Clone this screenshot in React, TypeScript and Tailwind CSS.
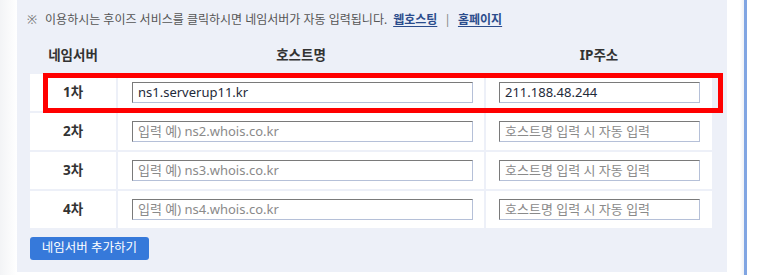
import React from 'react';

const rows = [
  { label: '1차', host: 'ns1.serverup11.kr', ip: '211.188.48.244' },
  { label: '2차', host: '', hostPh: '입력 예) ns2.whois.co.kr', ip: '' },
  { label: '3차', host: '', hostPh: '입력 예) ns3.whois.co.kr', ip: '' },
  { label: '4차', host: '', hostPh: '입력 예) ns4.whois.co.kr', ip: '' },
];

const font = { fontFamily: '"Noto Sans", "Noto Sans CJK KR", sans-serif' };

function Field({ value, placeholder, className }: { value: string; placeholder?: string; className: string }) {
  return (
    <div
      className={
        'flex h-[21px] items-center border border-t-[#7a7a7a] border-l-[#7a7a7a] border-r-[#b5c0d8] border-b-[#b5c0d8] bg-white px-[5px] text-[13px] leading-none ' +
        className
      }
    >
      {value ? (
        <span className="text-[#1e2a3a]">{value}</span>
      ) : (
        <span className="text-[#8a8a8a]">{placeholder}</span>
      )}
    </div>
  );
}

export default function App() {
  return (
    <div className="relative flex h-[275px] w-[760px] bg-white" style={font}>
      <div className="w-[17px] bg-gradient-to-r from-[#f3f4f6] to-white" />

      <div className="flex h-[272px] w-[710px] flex-col bg-[#edf0f8] px-[10px]">
        <div className="mt-[10px] flex h-[20px] items-center text-[12px] text-[#555]">
          <span className="mr-[8px] text-[#777]">※</span>
          <span>이용하시는 후이즈 서비스를 클릭하시면 네임서버가 자동 입력됩니다.</span>
          <a className="ml-[6px] font-bold text-[#2b4c8c] underline underline-offset-2">웹호스팅</a>
          <span className="mx-[7px] text-[#888]">|</span>
          <a className="font-bold text-[#2b4c8c] underline underline-offset-2">홈페이지</a>
        </div>

        <div className="ml-[3px] w-[682px]">
          <div className="mt-[15px] grid h-[29px] grid-cols-[86px_366px_1fr] gap-x-[2px] text-[13.5px] font-bold text-[#333]">
            <div className="text-center">네임서버</div>
            <div className="text-center">호스트명</div>
            <div className="text-center">IP주소</div>
          </div>

          <div className="flex flex-col gap-y-[2px]">
            {rows.map((r) => (
              <div key={r.label} className="grid h-[37px] grid-cols-[86px_366px_1fr] gap-x-[2px]">
                <div className="flex items-center justify-center bg-white text-[13.5px] font-bold text-[#333]">
                  {r.label}
                </div>
                <div className="flex items-center bg-white pl-[14px]">
                  <Field value={r.host} placeholder={r.hostPh} className="w-[341px]" />
                </div>
                <div className="flex items-center bg-white pl-[13px]">
                  <Field value={r.ip} placeholder="호스트명 입력 시 자동 입력" className="w-[201px]" />
                </div>
              </div>
            ))}
          </div>

          <button
            type="button"
            className="mt-[9px] flex h-[23px] w-[119px] items-center justify-center rounded-[3px] bg-[#3679da] text-[12.5px] text-white"
          >
            네임서버 추가하기
          </button>
        </div>
      </div>

      <div className="w-[13px] bg-white" />
      <div className="w-[4px] bg-gradient-to-r from-white to-[#eef1f5]" />
      <div className="w-[3px] bg-[#80a5e2]" />

      <div className="pointer-events-none absolute left-[43px] top-[73px] h-[40px] w-[680px] border-[5px] border-[#ff0000]" />
    </div>
  );
}
